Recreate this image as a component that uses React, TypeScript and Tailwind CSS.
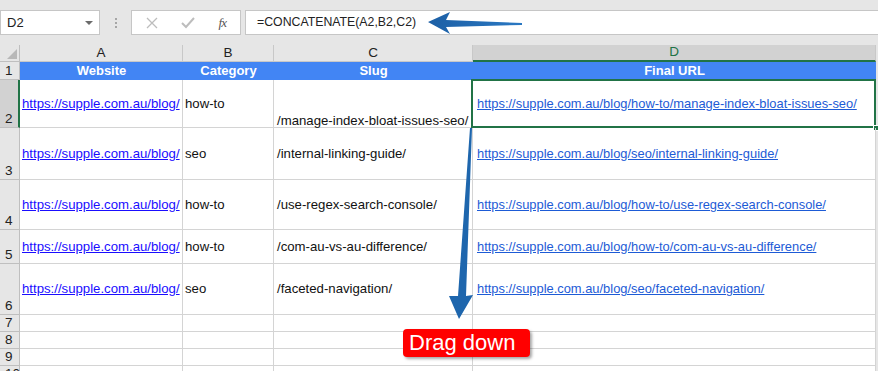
import React from "react"

const rows = [
  { n: "2", h: "h-[48px]", a: true, b: "how-to", c: "/manage-index-bloat-issues-seo/", d: "https://supple.com.au/blog/how-to/manage-index-bloat-issues-seo/", cBottom: true },
  { n: "3", h: "h-[52px]", a: true, b: "seo", c: "/internal-linking-guide/", d: "https://supple.com.au/blog/seo/internal-linking-guide/" },
  { n: "4", h: "h-[50px]", a: true, b: "how-to", c: "/use-regex-search-console/", d: "https://supple.com.au/blog/how-to/use-regex-search-console/" },
  { n: "5", h: "h-[34px]", a: true, b: "how-to", c: "/com-au-vs-au-difference/", d: "https://supple.com.au/blog/how-to/com-au-vs-au-difference/" },
  { n: "6", h: "h-[51px]", a: true, b: "seo", c: "/faceted-navigation/", d: "https://supple.com.au/blog/seo/faceted-navigation/" },
  { n: "7", h: "h-[17px]" },
  { n: "8", h: "h-[17px]" },
  { n: "9", h: "h-[17px]" },
  { n: "10", h: "h-[17px]" },
]

const font = "font-['Liberation_Sans',Arial,sans-serif]"

export default function App() {
  return (
    <div className={`relative w-[878px] h-[371px] overflow-hidden bg-white ${font}`}>
      {/* formula bar */}
      <div className="h-[45px] bg-[#e6e6e6] flex items-start pt-[10px]">
        <div className="w-[100px] h-[25px] bg-white border border-[#c6c6c6] flex items-center justify-between pl-[6px] pr-[6px]">
          <span className="text-[13px] text-[#222]">D2</span>
          <span className="w-0 h-0 border-l-[4px] border-r-[4px] border-t-[4px] border-l-transparent border-r-transparent border-t-[#6b6b6b]" />
        </div>
        <div className="w-[31px] h-[25px] flex items-center justify-center">
          <div className="flex flex-col gap-[2px]">
            <span className="w-[2px] h-[2px] bg-[#a6a6a6]" />
            <span className="w-[2px] h-[2px] bg-[#a6a6a6]" />
            <span className="w-[2px] h-[2px] bg-[#a6a6a6]" />
          </div>
        </div>
        <div className="w-[110px] h-[25px] bg-white border border-[#c6c6c6] flex items-center justify-between px-[14px]">
          <svg width="12" height="12" viewBox="0 0 12 12">
            <path d="M1 1L11 11M11 1L1 11" stroke="#bdbdbd" strokeWidth="1.3" />
          </svg>
          <svg width="14" height="12" viewBox="0 0 14 12">
            <path d="M1 6L5 10L13 1" stroke="#bdbdbd" strokeWidth="2" fill="none" />
          </svg>
          <span className="text-[13px] italic text-[#555] font-['Liberation_Serif',serif] tracking-[-1px]">fx</span>
        </div>
        <div className="ml-[4px] flex-1 h-[25px] bg-white border border-[#c6c6c6] border-r-0 flex items-center pl-[11px]">
          <span className="text-[12.3px] text-[#222]">=CONCATENATE(A2,B2,C2)</span>
        </div>
      </div>

      {/* grid */}
      <div className="grid grid-cols-[20px_163px_91px_199px_403px_2px]">
        {/* column header row */}
        <div className="h-[17px] bg-[#e6e6e6] border-r border-b border-[#bfbfbf] flex items-end justify-end">
          <svg width="10" height="10" viewBox="0 0 10 10" className="mr-[2px] mb-[2px]">
            <path d="M10 0L10 10L0 10Z" fill="#b8b8b8" />
          </svg>
        </div>
        {["A", "B", "C"].map((l) => (
          <div key={l} className="h-[17px] bg-[#e6e6e6] border-r border-b border-[#c8c8c8] flex items-center justify-center text-[13.5px] text-[#222]">
            {l}
          </div>
        ))}
        <div className="h-[17px] bg-[#d2d2d2] border-r border-[#c8c8c8] border-b-2 border-b-[#217346] flex items-center justify-center text-[13.5px] text-[#217346]">
          D
        </div>
        <div className="h-[17px] bg-[#e6e6e6]" />

        {/* row 1 */}
        <div className="h-[18px] bg-[#e6e6e6] border-r border-b border-[#bfbfbf] text-[13.5px] text-[#222] pl-[5px] leading-[18px]">1</div>
        {["Website", "Category", "Slug", "Final URL"].map((t) => (
          <div key={t} className="h-[18px] bg-[#4285f4] flex items-center justify-center text-[13px] font-bold text-white">
            {t}
          </div>
        ))}
        <div className="h-[18px] bg-[#e6e6e6]" />

        {rows.map((r) => {
          const sel = r.n === "2"
          return (
            <React.Fragment key={r.n}>
              <div
                className={`${r.h} border-b border-[#bfbfbf] flex items-end pl-[5px] text-[13.5px] text-[#222] leading-[16px] ${
                  sel ? "bg-[#d2d2d2] border-r-2 border-r-[#217346]" : "bg-[#e6e6e6] border-r"
                }`}
              >
                {r.n}
              </div>
              <div className={`${r.h} border-r border-b border-[#d4d4d4] flex items-center pl-[2px] text-[13.2px]`}>
                {r.a && <span className="text-[#1a0dff] underline">https://supple.com.au/blog/</span>}
              </div>
              <div className={`${r.h} border-r border-b border-[#d4d4d4] flex items-center pl-[2px] text-[13.2px] text-[#111]`}>
                {r.b}
              </div>
              <div className={`${r.h} border-r border-b border-[#d4d4d4] flex ${r.cBottom ? "items-end leading-[13px] pb-0" : "items-center"} pl-[3px] text-[13.2px] text-[#111]`}>
                {r.c}
              </div>
              <div className={`${r.h} relative border-r border-b border-[#d4d4d4] flex items-center pl-[4px] text-[12.9px]`}>
                {r.d && <span className="text-[#1d5bd6] underline">{r.d}</span>}
                {sel && (
                  <>
                    <div className="absolute -left-[2px] -top-[1px] -right-[1px] -bottom-[1px] border-2 border-[#217346]" />
                    <div className="absolute -right-[4px] -bottom-[4px] w-[6px] h-[6px] bg-[#217346] border border-white" />
                  </>
                )}
              </div>
              <div className={`${r.h} bg-[#e6e6e6]`} />
            </React.Fragment>
          )
        })}
      </div>

      {/* annotation arrows */}
      <svg className="absolute left-0 top-0 pointer-events-none" width="878" height="371">
        <defs>
          <linearGradient id="ag" x1="0" x2="1" y1="0" y2="0">
            <stop offset="0" stopColor="#1c5fa5" />
            <stop offset="1" stopColor="#2a78c2" />
          </linearGradient>
        </defs>
        <polygon points="428,22 450,12 446,20 522,23 522,25 446,27 450,34" fill="url(#ag)" />
        <polygon points="470,128 472,128 466,296 473,295 459,319 449,296 458,296" fill="#1e66ad" />
      </svg>

      {/* label */}
      <div className="absolute left-[403px] top-[329px] w-[127px] h-[28px] bg-[#ff0000] rounded-[4px] shadow-[2px_2px_3px_rgba(0,0,0,0.35)] flex items-center pl-[6px] text-white text-[22px] leading-none">
        Drag down
      </div>
    </div>
  )
}
